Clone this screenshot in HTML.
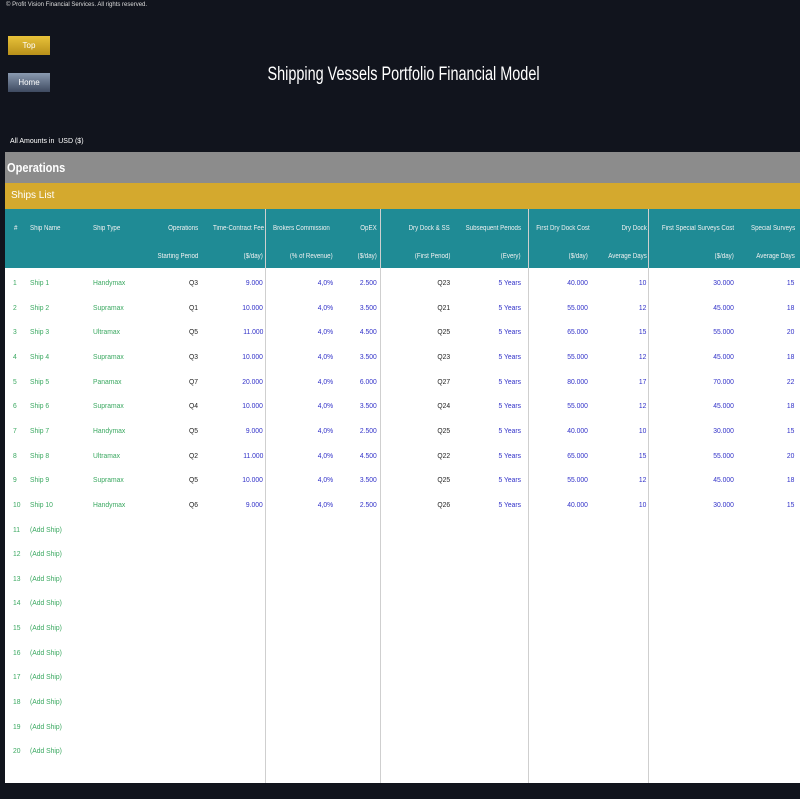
<!DOCTYPE html>
<html><head><meta charset="utf-8"><style>
body{margin:0;width:800px;height:799px;background:#11141d;position:relative;overflow:hidden;font-family:"Liberation Sans Narrow","Liberation Sans",sans-serif;}
.a{position:absolute;white-space:nowrap;}
.t{font-size:8px;color:#fff;}
.btn{position:absolute;left:8px;width:42px;height:19px;font-size:8px;color:#fff;text-align:center;line-height:19px;}
.h{font-size:7px;color:#f0f0f0;position:absolute;white-space:nowrap;transform:scaleX(.88);}
.c{font-size:7.5px;position:absolute;white-space:nowrap;transform:scaleX(.9);}
.g{color:#3aa860}.b{color:#3030c8}.k{color:#222}
.vl{position:absolute;top:209px;height:574px;width:1px;background:#cfcfcf;}
</style></head><body>
<div class="a t" style="left:6px;top:2px;font-size:6px;color:#ddd">© Profit Vision Financial Services. All rights reserved.</div>
<div class="btn" style="top:36px;background:linear-gradient(#e8c23a,#b8901a);color:#fff">Top</div>
<div class="btn" style="top:73px;background:linear-gradient(#8a9ab0,#3e4a60)">Home</div>
<div class="a" style="left:0;width:800px;top:64px;text-align:center;color:#fff;font-size:19px;padding-left:4px;transform:scaleX(.76)">Shipping Vessels Portfolio Financial Model</div>
<div class="a t" style="left:10px;top:138px;font-size:7px">All Amounts in&nbsp; USD ($)</div>
<div class="a" style="left:5px;top:152px;width:795px;height:31px;background:#8c8c8c"></div>
<div class="a" style="left:7px;top:160px;color:#fff;font-size:13px;font-weight:bold;transform:scaleX(.85);transform-origin:left">Operations</div>
<div class="a" style="left:5px;top:183px;width:795px;height:26px;background:#d4a92e"></div>
<div class="a" style="left:11px;top:190px;color:#fff;font-size:10px">Ships List</div>
<div class="a" style="left:5px;top:209px;width:795px;height:59px;background:#1f8b95"></div>
<div class="a" style="left:5px;top:268px;width:795px;height:515px;background:#fff"></div>
<div class="vl" style="left:265px"></div><div class="vl" style="left:380px"></div><div class="vl" style="left:528px"></div><div class="vl" style="left:648px"></div>
<div id="c"></div>
<script>
var o='';
function H(t,x,y,r){o+='<div class="h" style="top:'+y+'px;transform-origin:'+(r?'right':'left')+';'+(r?'right:'+(800-x)+'px':'left:'+x+'px')+'">'+t+'</div>';}
var y1=225,y2=253;
H('#',14,y1);H('Ship Name',30,y1);H('Ship Type',93,y1);H('Operations',198,y1,1);H('Starting Period',198,y2,1);
H('Time-Contract Fee',264,y1,1);H('($/day)',263,y2,1);H('Brokers Commission',273,y1);H('(% of Revenue)',333,y2,1);
H('OpEX',377,y1,1);H('($/day)',377,y2,1);H('Dry Dock &amp; SS',450,y1,1);H('(First Period)',450,y2,1);
H('Subsequent Periods',521,y1,1);H('(Every)',521,y2,1);H('First Dry Dock Cost',590,y1,1);H('($/day)',588,y2,1);
H('Dry Dock',647,y1,1);H('Average Days',647,y2,1);H('First Special Surveys Cost',734,y1,1);H('($/day)',734,y2,1);
H('Special Surveys',795,y1,1);H('Average Days',795,y2,1);
var d=[['Handymax','Q3','9.000','2.500','Q23','40.000',10,'30.000',15],['Supramax','Q1','10.000','3.500','Q21','55.000',12,'45.000',18],['Ultramax','Q5','11.000','4.500','Q25','65.000',15,'55.000',20],['Supramax','Q3','10.000','3.500','Q23','55.000',12,'45.000',18],['Panamax','Q7','20.000','6.000','Q27','80.000',17,'70.000',22],['Supramax','Q4','10.000','3.500','Q24','55.000',12,'45.000',18],['Handymax','Q5','9.000','2.500','Q25','40.000',10,'30.000',15],['Ultramax','Q2','11.000','4.500','Q22','65.000',15,'55.000',20],['Supramax','Q5','10.000','3.500','Q25','55.000',12,'45.000',18],['Handymax','Q6','9.000','2.500','Q26','40.000',10,'30.000',15]];
function C(t,x,y,cl,r){o+='<div class="c '+cl+'" style="top:'+y+'px;transform-origin:'+(r?'right':'left')+';'+(r?'right:'+(800-x)+'px':'left:'+x+'px')+'">'+t+'</div>';}
for(var i=0;i<20;i++){var y=278+i*24.65;C(i+1,13,y,'g');
if(i<10){var r=d[i];C('Ship '+(i+1),30,y,'g');C(r[0],93,y,'g');C(r[1],198,y,'k',1);C(r[2],263,y,'b',1);C('4,0%',333,y,'b',1);C(r[3],377,y,'b',1);C(r[4],450,y,'k',1);C('5 Years',521,y,'b',1);C(r[5],588,y,'b',1);C(r[6],646,y,'b',1);C(r[7],734,y,'b',1);C(r[8],794,y,'b',1);}
else C('(Add Ship)',30,y,'g');}
document.getElementById('c').innerHTML=o;
</script>
</body></html>
